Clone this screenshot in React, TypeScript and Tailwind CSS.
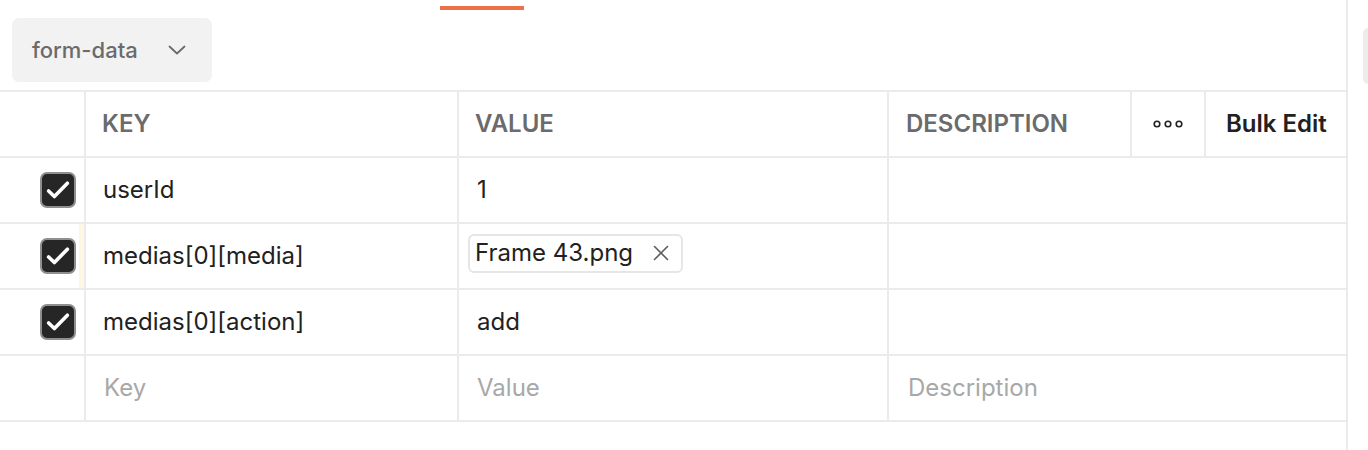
const font = { fontFamily: 'Inter, "Noto Sans", sans-serif' }

const rows = [
  { key: 'userId', value: '1' },
  { key: 'medias[0][media]', file: 'Frame 43.png', marked: true },
  { key: 'medias[0][action]', value: 'add' },
]

function Checkbox() {
  return (
    <div className="flex h-[36px] w-[36px] items-center justify-center rounded-[7px] border-2 border-[#8f8f8f] bg-[#262626]">
      <svg width="30" height="30" viewBox="0 0 24 24" fill="none">
        <path d="M4.5 12.8l4.6 4.4L19.5 6.6" stroke="#fff" strokeWidth="2.9" strokeLinecap="round" strokeLinejoin="round" />
      </svg>
    </div>
  )
}

function Dots() {
  return (
    <svg width="32" height="10" viewBox="0 0 32 10" fill="none">
      <circle cx="5" cy="5" r="2.8" stroke="#212121" strokeWidth="1.6" />
      <circle cx="16" cy="5" r="2.8" stroke="#212121" strokeWidth="1.6" />
      <circle cx="27" cy="5" r="2.8" stroke="#212121" strokeWidth="1.6" />
    </svg>
  )
}

const cell = 'flex items-center border-r-2 border-b-2 border-[#ebebeb]'

export default function App() {
  return (
    <div className="flex h-[450px] w-[1368px] overflow-hidden bg-white" style={font}>
      <div className="w-[1348px] shrink-0 border-r-2 border-[#ebebeb]">
        <div className="h-[10px] pt-[6px]">
          <div className="ml-[440px] h-[4px] w-[84px] bg-[#ed7147]" />
        </div>

        <div className="ml-[12px] mt-[8px] flex h-[64px] w-[200px] items-center justify-between rounded-[7px] bg-[#f2f2f2] pl-[20px] pr-[26px]">
          <span className="text-[22px] font-medium text-[#6b6b6b]">form-data</span>
          <svg width="18" height="10" viewBox="0 0 18 10" fill="none">
            <path d="M1.5 1.5L9 8.5l7.5-7" stroke="#6b6b6b" strokeWidth="1.8" strokeLinecap="round" strokeLinejoin="round" />
          </svg>
        </div>

        <div className="mt-[8px] grid grid-cols-[86px_373px_430px_243px_74px_1fr] border-t-2 border-[#ebebeb] text-[24px]">
          {/* header */}
          <div className={`${cell} h-[66px]`} />
          <div className={`${cell} h-[66px] pl-[16px] font-semibold text-[#6b6b6b]`}>KEY</div>
          <div className={`${cell} h-[66px] pl-[16px] font-semibold text-[#6b6b6b]`}>VALUE</div>
          <div className={`${cell} h-[66px] pl-[17px] font-semibold text-[#6b6b6b]`}>DESCRIPTION</div>
          <div className={`${cell} h-[66px] justify-center`}>
            <Dots />
          </div>
          <div className="flex h-[66px] items-center border-b-2 border-[#ebebeb] pl-[20px] font-semibold text-[#212121]">Bulk Edit</div>

          {rows.map((r) => (
            <div key={r.key} className="contents">
              <div className={`${cell} relative h-[66px] pl-[40px]`}>
                <Checkbox />
                {r.marked && <div className="absolute bottom-0 right-0 top-0 w-[5px] bg-[#fdf7e3]" />}
              </div>
              <div className={`${cell} h-[66px] pl-[17px] text-[#212121]`}>{r.key}</div>
              <div className={`${cell} h-[66px] ${r.file ? 'pl-[9px]' : 'pl-[18px]'} text-[#212121]`}>
                {r.file ? (
                  <div className="mb-[6px] flex h-[39px] items-center gap-[20px] rounded-[6px] border-2 border-[#e6e6e6] pl-[5px] pr-[12px]">
                    <span>{r.file}</span>
                    <svg width="16" height="16" viewBox="0 0 16 16" fill="none">
                      <path d="M1.5 1.5l13 13M14.5 1.5l-13 13" stroke="#5c5c5c" strokeWidth="1.6" strokeLinecap="round" />
                    </svg>
                  </div>
                ) : (
                  r.value
                )}
              </div>
              <div className="col-span-3 h-[66px] border-b-2 border-[#ebebeb]" />
            </div>
          ))}

          {/* placeholder row */}
          <div className={`${cell} h-[66px]`} />
          <div className={`${cell} h-[66px] pl-[18px] text-[#a8a8a8]`}>Key</div>
          <div className={`${cell} h-[66px] pl-[18px] text-[#a8a8a8]`}>Value</div>
          <div className="col-span-3 flex h-[66px] items-center border-b-2 border-[#ebebeb] pl-[19px] text-[#a8a8a8]">Description</div>
        </div>
      </div>
      <div className="ml-[15px] mt-[28px] h-[56px] w-[8px] rounded-l-[6px] bg-[#ececec]" />
    </div>
  )
}
